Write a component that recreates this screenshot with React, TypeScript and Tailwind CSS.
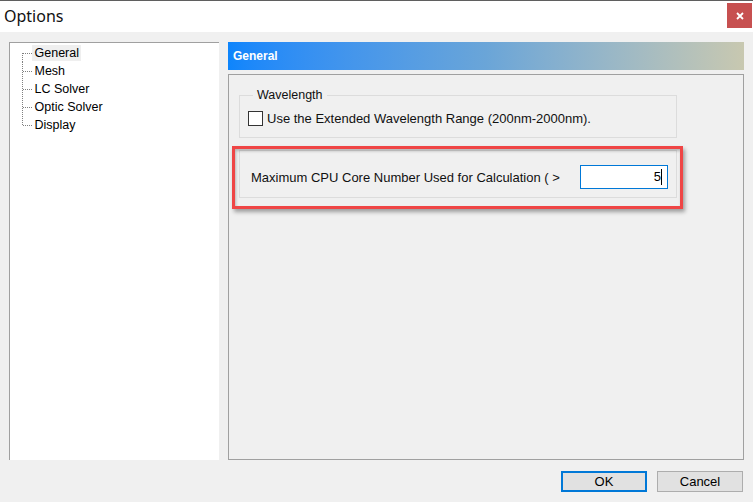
import React from "react";

const items = ["General", "Mesh", "LC Solver", "Optic Solver", "Display"];

function Connector({ first, last }: { first: boolean; last: boolean }) {
  return (
    <svg width="22" height="18" className="shrink-0" shapeRendering="crispEdges">
      <line
        x1="12.5"
        x2="12.5"
        y1={first ? 9 : 0}
        y2={last ? 9.5 : 18}
        stroke="#808080"
        strokeWidth="1"
        strokeDasharray="1 1"
      />
      <line x1="13" x2="22" y1="9.5" y2="9.5" stroke="#808080" strokeWidth="1" strokeDasharray="1 1" />
    </svg>
  );
}

export default function App() {
  return (
    <div className="relative w-[753px] h-[502px] bg-[#f0f0f0] flex flex-col border-t border-[#5f5f5f] font-['Liberation_Sans',Arial,sans-serif] text-black overflow-hidden">
      {/* Title bar */}
      <div className="h-[31px] bg-white flex items-start justify-between shrink-0">
        <span className="pl-[4px] text-[16px] leading-[30px] font-['Noto_Sans',sans-serif] text-[#111]">Options</span>
        <button className="mt-[2px] mr-[1px] w-[25px] h-[25px] bg-[#c75050] flex items-center justify-center">
          <svg width="8" height="8" viewBox="0 0 8 8">
            <path d="M1 1 L7 7 M7 1 L1 7" stroke="white" strokeWidth="1.8" />
          </svg>
        </button>
      </div>

      {/* Body */}
      <div className="flex pt-[10px] pl-[9px]">
        {/* Tree */}
        <div className="w-[210px] h-[418px] bg-white border-l border-t border-[#a0a0a0] pt-[1px] text-[12.5px]">
          {items.map((t, i) => (
            <div key={t} className="flex items-center h-[18px]">
              <Connector first={i === 0} last={i === items.length - 1} />
              <span
                className={
                  "h-[16px] leading-[16px] px-[2.5px] whitespace-nowrap " + (i === 0 ? "bg-[#efefef]" : "")
                }
              >
                {t}
              </span>
            </div>
          ))}
        </div>

        {/* Right side */}
        <div className="ml-[9px] w-[516px] flex flex-col">
          <div className="h-[28px] bg-gradient-to-r from-[#0d85fc] via-[#6aa5d8] to-[#c8c8b0] text-white font-bold text-[12px] pl-[5px] flex items-center">
            General
          </div>
          <div className="mt-[4px] h-[386px] border border-[#a0a0a0] pt-[12px] pl-[10px]">
            <fieldset className="w-[438px] border border-[#dcdcdc] pb-[11px]">
              <legend className="ml-[13px] px-[4px] text-[12.5px] leading-[16px] text-[#111]">Wavelength</legend>
              <div className="flex items-center mt-[8px] ml-[8px] h-[15px]">
                <span className="w-[15px] h-[15px] border border-[#333] bg-white shrink-0" />
                <span className="ml-[4px] text-[13px] text-[#111] whitespace-nowrap">
                  Use the Extended Wavelength Range (200nm-2000nm).
                </span>
              </div>
            </fieldset>
            <div className="mt-[12px] w-[438px] h-[48px] border border-[#dcdcdc] flex items-start justify-between pl-[11px] pr-[8px] pt-[14px]">
              <span className="mt-[4px] text-[13px] leading-[18px] text-[#111] whitespace-nowrap">
                Maximum CPU Core Number Used for Calculation ( &gt;
              </span>
              <div className="w-[88px] h-[24px] border border-[#0078d7] bg-white flex items-center justify-end pr-[5px] text-[13px]">
                <span>5</span>
                <span className="w-[1px] h-[16px] bg-black" />
              </div>
            </div>
          </div>
        </div>
      </div>

      {/* Buttons */}
      <div className="flex justify-end gap-[10px] pr-[10px] mt-[11px]">
        <button className="w-[86px] h-[21px] border-2 border-[#0078d7] bg-[#e1e1e1] text-[13px] leading-[17px]">OK</button>
        <button className="w-[86px] h-[21px] border border-[#adadad] bg-[#e1e1e1] text-[13px] leading-[19px]">Cancel</button>
      </div>

      {/* Red annotation */}
      <div className="absolute left-[232px] top-[145px] w-[451px] h-[63px] border-[3px] border-[#ef4545] shadow-[2px_3px_4px_rgba(0,0,0,0.35),inset_1px_2px_3px_rgba(0,0,0,0.25)] pointer-events-none" />
    </div>
  );
}
